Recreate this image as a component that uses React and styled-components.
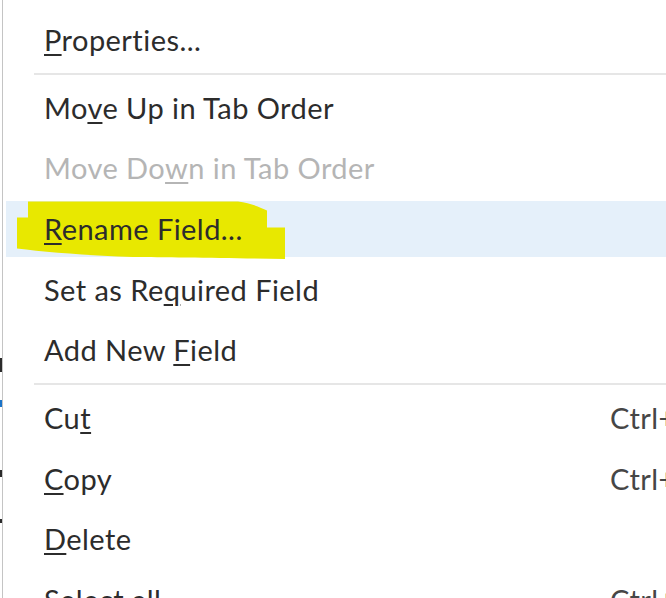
import React from 'react';
import styled, { createGlobalStyle } from 'styled-components';

const GlobalStyle = createGlobalStyle`
  html, body {
    margin: 0;
    padding: 0;
    background: #ffffff;
    overflow: hidden;
  }
  body {
    font-family: Lato, "Open Sans", "Liberation Sans", sans-serif;
  }
`;

const Page = styled.div`
  display: flex;
  align-items: flex-start;
  width: 666px;
  height: 598px;
  overflow: hidden;
`;

// sliver of the document behind the menu, with a few stray marks
const Backdrop = styled.div`
  width: 2px;
  height: 598px;
  flex-shrink: 0;
  background:
    linear-gradient(#2a2a2a, #2a2a2a) 0 358px / 2px 14px no-repeat,
    linear-gradient(#1a73c8, #1a73c8) 0 400px / 2px 7px no-repeat,
    linear-gradient(#2a2a2a, #2a2a2a) 0 470px / 2px 7px no-repeat,
    linear-gradient(#2a2a2a, #2a2a2a) 0 519px / 2px 4px no-repeat,
    #ffffff;
`;

const Menu = styled.div`
  flex-shrink: 0;
  width: 800px;
  min-height: 598px;
  padding: 10px 0 0 3px;
  border-left: 1px solid #c4c4c4;
  background: #ffffff;
  display: flex;
  flex-direction: column;
`;

const Item = styled.div`
  position: relative;
  flex-shrink: 0;
  height: 56px;
  margin: 2.35px 0;
  padding-left: 38px;
  display: grid;
  grid-template-columns: 566px auto;
  align-items: center;
  background: ${p => (p.$active ? '#e5f0fa' : 'transparent')};
  color: ${p => (p.$disabled ? '#b5b5b5' : '#2c2c2c')};
  font-size: 29px;
  line-height: 1.2;
  letter-spacing: 0.45px;
  white-space: nowrap;
`;

const Label = styled.span`
  position: relative;
  z-index: 1;
`;

const Key = styled.span`
  text-decoration: underline;
  text-decoration-thickness: 2px;
  text-underline-offset: 3px;
`;

const Shortcut = styled.span`
  position: relative;
  z-index: 1;
  color: #464646;
`;

const Separator = styled.div`
  flex-shrink: 0;
  height: 2px;
  margin: 2px 0 3px 28px;
  background: #e6e6e6;
`;

const Marker = styled.svg`
  position: absolute;
  left: 0;
  top: 0;
  z-index: 0;
  overflow: visible;
`;

function Highlighter() {
  return (
    <Marker width="290" height="60" viewBox="0 0 290 60">
      <path
        d="M22 0.5 L232 0.5 C244 2 254 6 261 9.5 L261 26.5 L279 26.5 L279 58
           C220 57 160 56.5 127 56 C80 54.5 40 51 11 47.5 L11 16.5 L22 16.5 Z"
        fill="#e8e800"
      />
    </Marker>
  );
}

function Mnemonic({ text, at }) {
  return (
    <>
      {text.slice(0, at)}
      <Key>{text[at]}</Key>
      {text.slice(at + 1)}
    </>
  );
}

const sections = [
  [
    { text: 'Properties...', at: 0 },
  ],
  [
    { text: 'Move Up in Tab Order', at: 2 },
    { text: 'Move Down in Tab Order', at: 7, disabled: true },
    { text: 'Rename Field...', at: 0, active: true, marked: true },
    { text: 'Set as Required Field', at: 9 },
    { text: 'Add New Field', at: 8 },
  ],
  [
    { text: 'Cut', at: 2, shortcut: 'Ctrl+X' },
    { text: 'Copy', at: 0, shortcut: 'Ctrl+C' },
    { text: 'Delete', at: 0 },
    { text: 'Select all', at: 7, shortcut: 'Ctrl+A' },
  ],
];

export default function App() {
  return (
    <>
      <GlobalStyle />
      <Page>
        <Backdrop />
        <Menu>
          {sections.map((items, i) => (
            <React.Fragment key={i}>
              {i > 0 && <Separator />}
              {items.map(item => (
                <Item key={item.text} $active={item.active} $disabled={item.disabled}>
                  {item.marked && <Highlighter />}
                  <Label>
                    <Mnemonic text={item.text} at={item.at} />
                  </Label>
                  {item.shortcut && <Shortcut>{item.shortcut}</Shortcut>}
                </Item>
              ))}
            </React.Fragment>
          ))}
        </Menu>
      </Page>
    </>
  );
}
